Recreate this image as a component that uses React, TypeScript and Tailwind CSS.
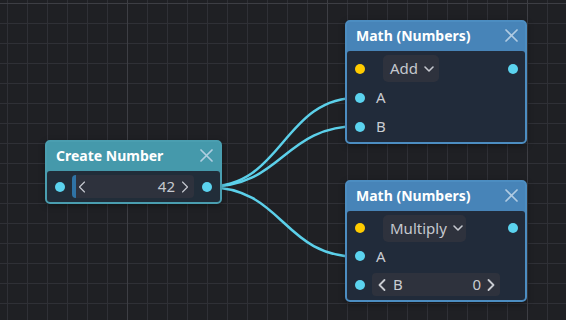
import { ChevronDown, ChevronLeft, ChevronRight } from 'lucide-react';

type Props = { children?: React.ReactNode };

function Dot({ color = 'bg-[#5bd3ef]' }: { color?: string }) {
  return <span className={`block w-[10px] h-[10px] rounded-full shrink-0 ${color}`}></span>;
}

function CloseIcon() {
  return (
    <svg width="13" height="13" viewBox="0 0 13 13" className="text-[#c3d8ea] opacity-85">
      <path d="M1 1 L12 12 M12 1 L1 12" stroke="currentColor" strokeWidth="1.7" strokeLinecap="round" />
    </svg>
  );
}

function Select({ label, width }: { label: string; width: string }) {
  return (
    <div className={`flex items-center h-[27px] rounded-[5px] bg-[#2e323d] pl-[7px] text-[15px] text-[#c5c8cf] ${width}`}>
      <span>{label}</span>
      <ChevronDown size={16} strokeWidth={2.4} className="ml-[3px] shrink-0 text-[#c5c8cf]" />
    </div>
  );
}

function MathNode({ top, children }: { top: string } & Props) {
  return (
    <div className={`absolute left-[345px] ${top} w-[182px] rounded-[5px] border-2 border-[#4c8dc1] bg-[#4784b8] shadow-[0_2px_6px_rgba(0,0,0,0.35)]`}>
      <div className="h-[29px] flex items-center justify-between pl-[9px] pr-[7px] pb-[3px]">
        <span className="text-[14px] font-bold text-white">Math (Numbers)</span>
        <CloseIcon />
      </div>
      <div className="bg-[#1d212c]/90 rounded-[3px] pt-[3px] pb-[1px]">{children}</div>
    </div>
  );
}

export default function App() {
  return (
    <div
      className="relative w-[566px] h-[320px] overflow-hidden bg-[#1f2024] [background-image:linear-gradient(to_right,#3d3e44_1px,transparent_1px),linear-gradient(to_bottom,#3d3e44_1px,transparent_1px),linear-gradient(to_right,#2f3036_1px,transparent_1px),linear-gradient(to_bottom,#2f3036_1px,transparent_1px)] [background-size:200px_100%,100%_320px,20px_20px,20px_20px] [background-position:127px_0,0_3px,7px_3px,7px_3px] [background-repeat:repeat-x,no-repeat,repeat,repeat]"
      style={{ fontFamily: '"Noto Sans", "Open Sans", sans-serif' }}
    >
      {/* wires */}
      <svg className="absolute inset-0" width="566" height="320" fill="none">
        <g stroke="#5cd0ea" strokeWidth="2.5" strokeLinecap="round">
          <path d="M206 187 C 285 187, 281 97.5, 360 97.5" />
          <path d="M206 187 C 285 187, 281 126, 360 126" />
          <path d="M206 187 C 285 187, 281 257, 360 257" />
        </g>
      </svg>

      {/* Create Number */}
      <div className="absolute left-[45px] top-[140px] w-[177px] rounded-[5px] border-2 border-[#4a9eb0] bg-[#4599ab] shadow-[0_2px_6px_rgba(0,0,0,0.35)]">
        <div className="h-[29px] flex items-center justify-between pl-[9px] pr-[7px] pb-[3px]">
          <span className="text-[14px] font-bold text-white">Create Number</span>
          <CloseIcon />
        </div>
        <div className="bg-[#1d212c]/90 rounded-[3px] h-[31px] flex items-center">
          <span className="ml-[8px]"><Dot /></span>
          <div className="ml-[7px] w-[122px] h-[23px] rounded-[4px] bg-[#2e323d] flex items-center overflow-hidden text-[15px] text-[#c5c8cf]">
            <span className="w-[4px] h-full bg-[#2f73a5] shrink-0"></span>
            <ChevronLeft size={20} strokeWidth={1.4} className="ml-[-4px] shrink-0" />
            <span className="ml-auto">42</span>
            <ChevronRight size={20} strokeWidth={1.4} className="mr-[-1px] shrink-0" />
          </div>
          <span className="ml-auto mr-[8px]"><Dot /></span>
        </div>
      </div>

      {/* Math: Add */}
      <MathNode top="top-[20px]">
        <div className="h-[29px] flex items-center">
          <span className="ml-[8px]"><Dot color="bg-[#ffcc00]" /></span>
          <div className="ml-[18px]"><Select label="Add" width="w-[56px]" /></div>
          <span className="ml-auto mr-[7px]"><Dot /></span>
        </div>
        <div className="h-[29px] flex items-center text-[15px] text-[#c9ccd2]">
          <span className="ml-[8px]"><Dot /></span>
          <span className="ml-[11px]">A</span>
        </div>
        <div className="h-[29px] flex items-center text-[15px] text-[#c9ccd2]">
          <span className="ml-[8px]"><Dot /></span>
          <span className="ml-[11px]">B</span>
        </div>
      </MathNode>

      {/* Math: Multiply */}
      <MathNode top="top-[180px]">
        <div className="h-[28px] flex items-center">
          <span className="ml-[8px]"><Dot color="bg-[#ffcc00]" /></span>
          <div className="ml-[18px]"><Select label="Multiply" width="w-[83px]" /></div>
          <span className="ml-auto mr-[7px]"><Dot /></span>
        </div>
        <div className="h-[28px] flex items-center text-[15px] text-[#c9ccd2]">
          <span className="ml-[8px]"><Dot /></span>
          <span className="ml-[11px]">A</span>
        </div>
        <div className="h-[29px] flex items-center text-[15px] text-[#c9ccd2]">
          <span className="ml-[8px]"><Dot /></span>
          <div className="ml-[7px] w-[128px] h-[23px] rounded-[4px] bg-[#2e323d] flex items-center">
            <ChevronLeft size={20} strokeWidth={2.2} className="shrink-0" />
            <span className="ml-[1px]">B</span>
            <span className="ml-auto">0</span>
            <ChevronRight size={20} strokeWidth={2.2} className="mr-[-1px] shrink-0" />
          </div>
        </div>
      </MathNode>
    </div>
  );
}
